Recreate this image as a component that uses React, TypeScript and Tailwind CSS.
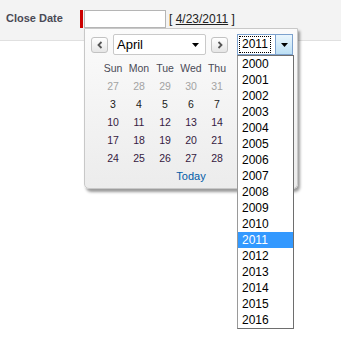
import React from "react";

const Tri = () => (
  <svg width="7" height="4" viewBox="0 0 7 4"><path d="M0 0h7L3.5 4z" fill="#000" /></svg>
);

const Chev = ({ dir }: { dir: "l" | "r" }) => (
  <svg width="6" height="8" viewBox="0 0 6 8">
    <path d={dir === "l" ? "M4.5 1L1.5 4l3 3" : "M1.5 1l3 3-3 3"} fill="none" stroke="#555" strokeWidth="1.8" />
  </svg>
);

export default function App() {
  const headers = ["Sun", "Mon", "Tue", "Wed", "Thu", "Fri", "Sat"];
  const rows: { n: number; prev?: boolean }[][] = [
    [27, 28, 29, 30, 31, 1, 2].map((n, i) => ({ n, prev: i < 5 })),
    [3, 4, 5, 6, 7, 8, 9].map((n) => ({ n })),
    [10, 11, 12, 13, 14, 15, 16].map((n) => ({ n })),
    [17, 18, 19, 20, 21, 22, 23].map((n) => ({ n })),
    [24, 25, 26, 27, 28, 29, 30].map((n) => ({ n })),
  ];
  const years = Array.from({ length: 17 }, (_, i) => 2000 + i);
  return (
    <div className="relative w-[341px] h-[337px] bg-white overflow-hidden font-['Liberation_Sans',Arial,sans-serif]">
      <div className="h-[41px] bg-[#f3f3f3] border-b border-[#e0e0e0] flex items-start pt-[10px]">
        <div className="w-[80px] pl-[6px] pt-[1px] text-[11px] font-bold text-[#4a4a56] leading-[14px]">Close Date</div>
        <div className="w-[3px] h-[18px] bg-[#cc0000]" />
        <div className="w-[82px] h-[18px] ml-[1px] bg-white border border-[#b5b5b5]" />
        <div className="ml-[3px] pt-[2px] text-[12px] leading-[14px] text-[#222]">
          [ <span className="underline">4/23/2011</span> ]
        </div>
      </div>

      <div className="absolute left-[84px] top-[28px] w-[214px] h-[161px] border border-[#c8c8c8] rounded-b-[5px] bg-gradient-to-b from-[#fbfbfb] to-[#ececec] shadow-[2px_3px_3px_rgba(0,0,0,0.4)]">
        <div className="flex items-center h-[21px] mt-[5px] pl-[6px]">
          <div className="w-[17px] h-[16px] rounded-[3px] border border-[#c2c2c2] bg-gradient-to-b from-white to-[#e6e6e6] flex items-center justify-center">
            <Chev dir="l" />
          </div>
          <div className="ml-[5px] w-[93px] h-[21px] bg-white border border-[#c9c9c9] rounded-[2px] flex items-center justify-between pl-[3px] pr-[6px]">
            <span className="text-[13px] text-black leading-none">April</span>
            <Tri />
          </div>
          <div className="ml-[5px] w-[17px] h-[16px] rounded-[3px] border border-[#c2c2c2] bg-gradient-to-b from-white to-[#e6e6e6] flex items-center justify-center">
            <Chev dir="r" />
          </div>
          <div className="ml-[9px] w-[56px] h-[21px] bg-white border border-[#7da2ce] flex">
            <div className="flex-1 flex items-center pl-[2px]">
              <span className="text-[12px] leading-[15px] px-[2px] text-black outline-1 outline-dotted outline-black">2011</span>
            </div>
            <div className="w-[17px] border-l border-[#7da2ce] bg-gradient-to-b from-[#eaf6fd] to-[#bde0f5] flex items-center justify-center">
              <Tri />
            </div>
          </div>
        </div>

        <div className="ml-[15px] mt-[4px] w-[182px] grid grid-cols-7 text-[10.5px] leading-[18px] text-center">
          {headers.map((h) => (
            <div key={h} className="text-[#4a4a56]">{h}</div>
          ))}
          {rows.map((r, ri) =>
            r.map((d, di) => (
              <div
                key={ri + "-" + di}
                className={d.prev ? "text-[#a3a3a3]" : ri === 1 ? "text-[#1a1a1a]" : "text-[#35203f]"}
              >
                {d.n}
              </div>
            ))
          )}
          <div className="col-span-7 text-[#015ba7] text-[11px]">Today</div>
        </div>
      </div>

      <div className="absolute left-[237px] top-[55px] w-[57px] h-[274px] bg-white border border-[#6e6e6e] border-l-[#9a9a9a] py-0">
        {years.map((y) => (
          <div
            key={y}
            className={
              "h-[16px] leading-[16px] pl-[4px] text-[12px] " +
              (y === 2011 ? "bg-[#3399ff] text-white" : "text-black")
            }
          >
            {y}
          </div>
        ))}
      </div>
    </div>
  );
}
